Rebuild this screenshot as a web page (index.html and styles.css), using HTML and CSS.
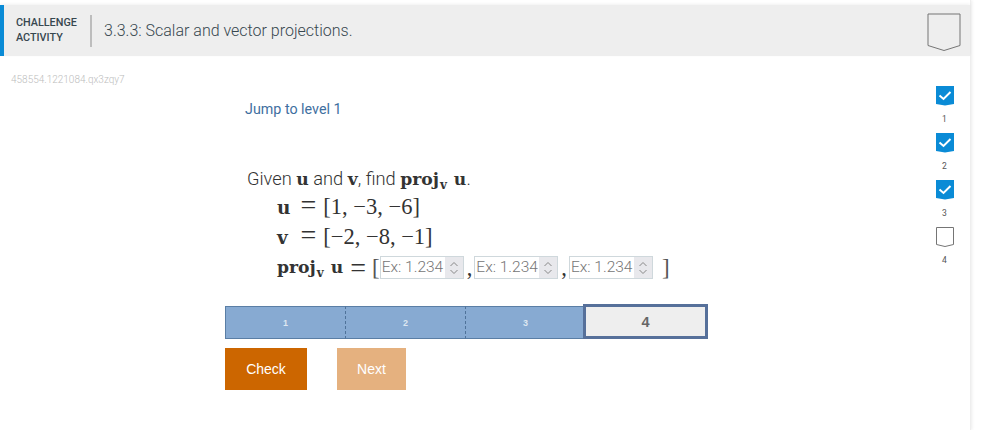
FILE: index.html
```html
<!DOCTYPE html>
<html lang="en">
<head>
<meta charset="utf-8">
<title>3.3.3: Scalar and vector projections</title>
<link rel="stylesheet" href="styles.css">
</head>
<body>
<div class="card">
  <header class="head">
    <div class="label">CHALLENGE<br>ACTIVITY</div>
    <div class="title">3.3.3: Scalar and vector projections.</div>
    <svg class="badge" width="34" height="38" viewBox="0 0 34 38"><path d="M1 1H33V32.500L17 37.500L1 32.500Z" fill="none" stroke="#757575" stroke-width="1"/></svg>
  </header>
  <div class="content">
    <div class="main">
      <div class="code">458554.1221084.qx3zqy7</div>
      <a class="jump">Jump to level 1</a>
      <div class="question">
        <p class="given">Given <b class="mb">u</b> and <b class="mb">v</b>, find <b class="mb">proj<sub>v</sub> u</b>.</p>
        <p class="eq"><b class="mb big">u</b><span class="op">=</span>[1, −3, −6]</p>
        <p class="eq"><b class="mb big">v</b><span class="op">=</span>[−2, −8, −1]</p>
        <div class="eq answer">
          <b class="mb">proj<sub>v</sub> u</b><span class="op tight">=</span><span class="bracket">[</span>
          <span class="box"><span class="ph">Ex: 1.234</span><span class="spin"><svg width="10" height="14" viewBox="0 0 10 14"><path d="M1.500 5L5 1.500L8.500 5M1.500 9L5 12.500L8.500 9" fill="none" stroke="#888" stroke-width="1"/></svg></span></span>
          <span class="comma">,</span>
          <span class="box"><span class="ph">Ex: 1.234</span><span class="spin"><svg width="10" height="14" viewBox="0 0 10 14"><path d="M1.500 5L5 1.500L8.500 5M1.500 9L5 12.500L8.500 9" fill="none" stroke="#888" stroke-width="1"/></svg></span></span>
          <span class="comma">,</span>
          <span class="box"><span class="ph">Ex: 1.234</span><span class="spin"><svg width="10" height="14" viewBox="0 0 10 14"><path d="M1.500 5L5 1.500L8.500 5M1.500 9L5 12.500L8.500 9" fill="none" stroke="#888" stroke-width="1"/></svg></span></span>
          <span class="bracket close">]</span>
        </div>
      </div>
      <div class="levels">
        <div class="level">1</div>
        <div class="level dash">2</div>
        <div class="level dash">3</div>
        <div class="level current">4</div>
      </div>
      <div class="buttons">
        <button class="btn check">Check</button>
        <button class="btn next">Next</button>
      </div>
    </div>
    <aside class="side">
      <div class="step"><svg class="chip" width="18" height="20" viewBox="0 0 18 20"><path d="M0 0H18V18L9 19.500L0 18Z" fill="#0a8bd6"/><path d="M3.500 9.500L7.500 13L14.500 6" fill="none" stroke="#fff" stroke-width="2"/></svg><span>1</span></div>
      <div class="step"><svg class="chip" width="18" height="20" viewBox="0 0 18 20"><path d="M0 0H18V18L9 19.500L0 18Z" fill="#0a8bd6"/><path d="M3.500 9.500L7.500 13L14.500 6" fill="none" stroke="#fff" stroke-width="2"/></svg><span>2</span></div>
      <div class="step"><svg class="chip" width="18" height="20" viewBox="0 0 18 20"><path d="M0 0H18V18L9 19.500L0 18Z" fill="#0a8bd6"/><path d="M3.500 9.500L7.500 13L14.500 6" fill="none" stroke="#fff" stroke-width="2"/></svg><span>3</span></div>
      <div class="step"><svg class="chip" width="18" height="20" viewBox="0 0 18 20"><path d="M.5 .5H17.500V17.500L9 19.500L.5 17.500Z" fill="none" stroke="#757575"/></svg><span>4</span></div>
    </aside>
  </div>
</div>
</body>
</html>
```

FILE: styles.css
```css
* { box-sizing: border-box; }
html, body { margin: 0; padding: 0; background: #fff; }
body { width: 982px; height: 430px; overflow: hidden; font-family: Roboto, sans-serif; }
.card { width: 971px; height: 430px; padding-top: 5px; border-right: 1px solid #eee; box-shadow: 1px 0 3px rgba(0,0,0,.08); background: #fff; }
.head { height: 51px; display: flex; align-items: center; background: #eeeeee; border-left: 4px solid #0a8bd6; box-shadow: 0 -1px 3px rgba(0,0,0,.06); }
.label { width: 88px; padding-left: 12px; font-size: 10.800px; font-weight: 500; line-height: 15px; color: #37474f; border-right: 2px solid #bdbdbd; height: 32px; }
.title { flex: 1; padding-left: 12px; font-size: 16px; font-weight: 300; color: #37474f; }
.badge { margin-right: 9px; margin-top: 2px; }
.content { display: flex; }
.main { width: 925px; padding-left: 225px; position: relative; }
.code { position: absolute; left: 11px; top: 18px; font-size: 10px; color: #bdbdbd; font-weight: 300; }
.jump { display: block; margin: 45px 0 0 20px; font-size: 14.300px; line-height: 17px; color: #3f6f9f; }
.question { margin: 48px 0 0 22px; font-size: 18.300px; font-weight: 300; color: #333; }
.question p { margin: 0; }
.given { line-height: 26px; }
.mb { font-family: "DejaVu Serif", serif; font-weight: 700; font-size: 17.200px; color: #333; }
.big { display: inline-block; width: 15.500px; font-size: 18.500px; }
.mb sub { font-size: 12px; line-height: 0; margin: 0 1px; }
.eq { margin-left: 30px !important; font-family: "Liberation Serif", serif; font-size: 22.500px; font-weight: 400; line-height: 29px; color: #333; }
.answer { display: flex; align-items: center; height: 31px; white-space: nowrap; }
.op { margin: 0 7px 0 8px; font-size: 28px; line-height: 0; font-weight: 400; }
.tight { margin: 0 6px 0 7px; }
.bracket { font-size: 23px; font-weight: 400; color: #555; }
.close { margin-left: 9px; }
.box { width: 84px; height: 23px; flex: none; display: flex; align-items: center; justify-content: space-between; border: 1px solid #cfd8dc; font-family: Roboto, sans-serif; font-size: 15.500px; font-weight: 300; color: #757575; padding-left: 1px; }
.spin { width: 18px; height: 21px; display: flex; align-items: center; justify-content: center; background: #e8e8ec; }
.comma { margin: 0 2px 0 3px; }
.levels { display: flex; width: 483px; height: 34px; margin-top: 22px; }
.level { width: 120px; height: 33px; margin-top: 1px; background: #87aad2; border-top: 1px solid #5a7ea5; border-bottom: 1px solid #5a7ea5; color: #dde7f1; font-size: 9px; font-weight: 700; font-family: "Liberation Sans", sans-serif; display: flex; align-items: center; justify-content: center; }
.level:first-child { border-left: 1px solid #5a7ea5; }
.dash { border-left: 1px dashed #4f7299; }
.current { width: 125px; height: 35px; margin-top: -1px; margin-left: -2px; background: #eee; border: 3px solid #56709a; color: #666; font-size: 14.500px; }
.buttons { display: flex; gap: 30px; margin-top: 9px; }
.btn { height: 42px; border: 0; padding: 0; font-family: "Liberation Sans", sans-serif; font-size: 14px; color: #fff; }
.check { width: 82px; background: #cc6600; }
.next { width: 69px; background: #e5b17f; }
.side { width: 44px; padding: 30px 0 0 10.500px; display: flex; flex-direction: column; }
.step { width: 18px; height: 47px; display: flex; flex-direction: column; align-items: center; font-size: 8.500px; font-weight: 400; color: #555; }
.chip { display: block; margin-bottom: 8px; flex: none; }
```
